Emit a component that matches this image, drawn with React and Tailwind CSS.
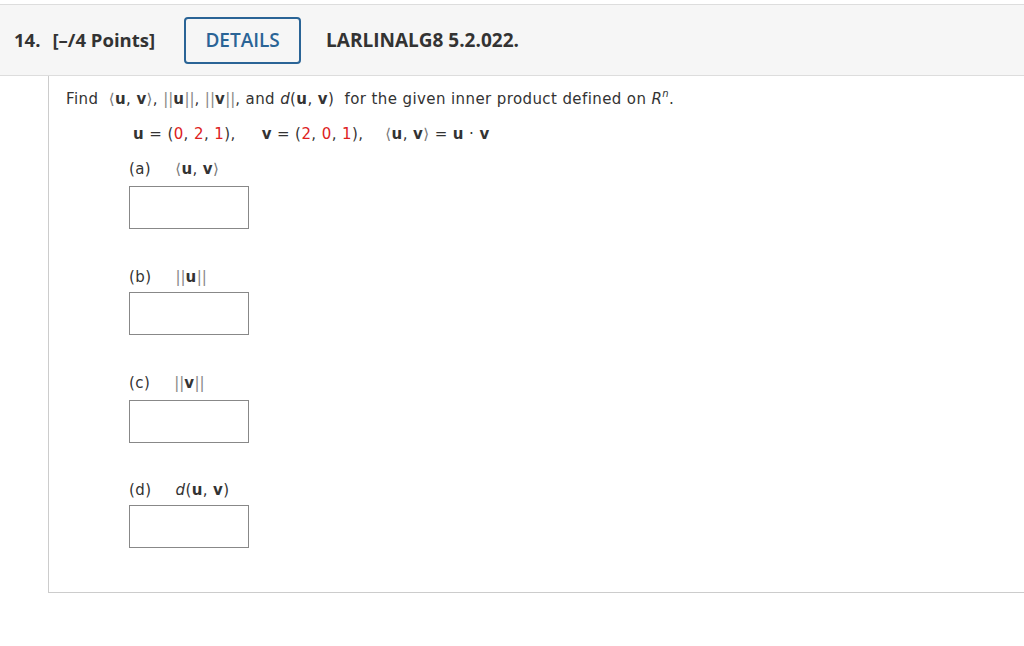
import React from 'react'

const ANS = 'block w-[120px] h-[43px] border border-[#888888] bg-white'

function UV() {
  return (
    <span>
      <span className="text-[#777777]">⟨</span>
      <b>u</b>, <b>v</b>
      <span className="text-[#777777]">⟩</span>
    </span>
  )
}

function Norm({ v }) {
  return (
    <span>
      <span className="text-[#888888] tracking-normal">||</span>
      <b>{v}</b>
      <span className="text-[#888888] tracking-normal">||</span>
    </span>
  )
}

function Part({ label, children, top, gap }) {
  return (
    <div className={top}>
      <div className="flex items-center gap-[24px] h-[20px]">
        <span>({label})</span>
        <span>{children}</span>
      </div>
      <input className={`${ANS} ${gap}`} />
    </div>
  )
}

export default function App() {
  return (
    <div className="w-[1024px] h-[646px] bg-white overflow-hidden text-[#333333]">
      <div className="mt-[4px] h-[72px] bg-[#f6f6f6] border-t border-b border-[#dddddd] flex items-center pl-[14px] font-['Open_Sans',sans-serif] text-[#333333]">
        <span className="font-bold text-[18.5px]">14.</span>
        <span className="font-bold text-[18.5px] ml-[12px]">[–/4 Points]</span>
        <button className="ml-[29px] w-[117px] h-[47px] rounded-[4px] border-2 border-[#2a6496] text-[#2a6496] text-[19px] font-semibold">
          DETAILS
        </button>
        <span className="font-bold text-[19px] ml-[25px]">LARLINALG8 5.2.022.</span>
      </div>

      <div className="ml-[48px] h-[517px] border-l border-b border-[#cccccc] pl-[17px] pt-[13px] font-['DejaVu_Sans',Verdana,sans-serif] text-[15px] tracking-[0.4px] text-[#333333]">
        <div className="h-[20px] flex items-center whitespace-pre">
          Find  <UV />, <Norm v="u" />, <Norm v="v" />, and <i>d</i>(<b>u</b>, <b>v</b>)  for the given inner product defined on <i>R</i><sup className="text-[10px] italic">n</sup>.
        </div>
        <div className="ml-[67px] mt-[15px] h-[20px] flex items-center whitespace-pre">
          <span><b>u</b> = (<span className="text-[#dd2222]">0</span>, <span className="text-[#dd2222]">2</span>, <span className="text-[#dd2222]">1</span>),</span>
          <span className="ml-[26px]"><b>v</b> = (<span className="text-[#dd2222]">2</span>, <span className="text-[#dd2222]">0</span>, <span className="text-[#dd2222]">1</span>),</span>
          <span className="ml-[22px]"><UV /> = <b>u</b> · <b>v</b></span>
        </div>
        <div className="ml-[63px]">
          <Part label="a" top="mt-[15px]" gap="mt-[7px]"><UV /></Part>
          <Part label="b" top="mt-[38px]" gap="mt-[5px]"><Norm v="u" /></Part>
          <Part label="c" top="mt-[38px]" gap="mt-[7px]"><Norm v="v" /></Part>
          <Part label="d" top="mt-[37px]" gap="mt-[5px]"><i>d</i>(<b>u</b>, <b>v</b>)</Part>
        </div>
      </div>
    </div>
  )
}
